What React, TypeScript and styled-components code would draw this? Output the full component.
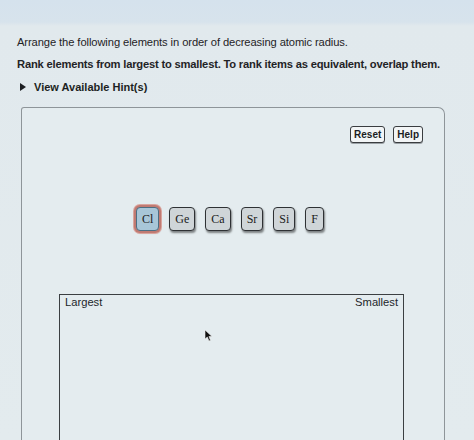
import React from "react";
import styled, { createGlobalStyle } from "styled-components";

const GlobalStyle = createGlobalStyle`
    html, body {
        margin: 0;
        padding: 0;
        background: #e1e9ed;
        font-family: "Liberation Sans", Arial, sans-serif;
        color: #1f2326;
        overflow: hidden;
    }
`;

const Page = styled.div`
    width: 474px;
    height: 440px;
    overflow: hidden;
    background: linear-gradient(180deg, #d5e2ed 0px, #d7e3ec 22px, #e1e9ed 26px, #e3ebee 100%);
`;

const Intro = styled.div`
    padding: 35px 0 0 17px;
`;

const Prompt = styled.p`
    margin: 0;
    font-size: 11.2px;
    line-height: 14px;
    letter-spacing: -0.1px;
`;

const Instruction = styled.p`
    margin: 8px 0 0;
    font-size: 11.2px;
    line-height: 14px;
    font-weight: 700;
    letter-spacing: -0.2px;
`;

const HintToggle = styled.div`
    display: flex;
    align-items: center;
    gap: 8px;
    margin: 10px 0 0 3px;
    font-size: 11px;
    font-weight: 700;
    color: #1c1f22;
`;

const Caret = styled.span`
    width: 0;
    height: 0;
    border-top: 4px solid transparent;
    border-bottom: 4px solid transparent;
    border-left: 6px solid #1c1f22;
`;

const Panel = styled.div`
    margin: 14px 0 0 21px;
    width: 424px;
    height: 340px;
    border: 1px solid #8e9599;
    border-bottom: none;
    border-radius: 3px 7px 0 0;
    box-sizing: border-box;
    padding: 18px 21px 0 37px;
    display: flex;
    flex-direction: column;
    background: #e4ecef;
`;

const Toolbar = styled.div`
    display: flex;
    justify-content: flex-end;
    gap: 8px;
`;

const ToolButton = styled.button`
    font-family: "Liberation Sans", Arial, sans-serif;
    font-size: 10px;
    font-weight: 700;
    color: #1b1d1f;
    background: #f2f5f6;
    border: 1px solid #3a3d40;
    border-radius: 3px;
    padding: 0 3px;
    height: 17px;
    line-height: 15px;
    box-shadow: 0 1px 0 #9aa1a5;
`;

const TileRow = styled.div`
    display: flex;
    justify-content: center;
    align-items: center;
    gap: 10px;
    margin: 64px 0 0 -22px;
`;

const Tile = styled.div<{ $selected?: boolean }>`
    font-family: "Liberation Serif", "Times New Roman", serif;
    font-size: 12px;
    color: #1a1a1a;
    height: 24px;
    min-width: 12px;
    padding: 0 5px;
    display: flex;
    align-items: center;
    justify-content: center;
    box-sizing: border-box;
    border-radius: 4px;
    border: 1.5px solid ${(p) => (p.$selected ? "#4c6e82" : "#2e3134")};
    background: ${(p) => (p.$selected ? "#a8c6d8" : "#cfd5d8")};
    box-shadow: ${(p) =>
        p.$selected
            ? "0 0 0 2px #c07a72, 0 0 0 3px #d9a59e, 1px 2px 2px rgba(0,0,0,0.3)"
            : "1px 2px 2px rgba(0,0,0,0.45)"};
`;

const RankBox = styled.div`
    position: relative;
    margin-top: 63px;
    width: 345px;
    flex: 1;
    border: 1.5px solid #3b3f42;
    border-bottom: none;
    box-sizing: border-box;
    display: flex;
    justify-content: space-between;
    align-items: flex-start;
    padding: 1px 5px 0 5px;
    font-size: 11.2px;
    color: #22262a;
`;

const Cursor = styled.svg`
    position: absolute;
    left: 144px;
    top: 34px;
`;

const elements = ["Cl", "Ge", "Ca", "Sr", "Si", "F"];

const App = () => {
    return (
        <Page>
            <GlobalStyle />
            <Intro>
                <Prompt>Arrange the following elements in order of decreasing atomic radius.</Prompt>
                <Instruction>
                    Rank elements from largest to smallest. To rank items as equivalent, overlap them.
                </Instruction>
                <HintToggle>
                    <Caret />
                    View Available Hint(s)
                </HintToggle>
            </Intro>
            <Panel>
                <Toolbar>
                    <ToolButton>Reset</ToolButton>
                    <ToolButton>Help</ToolButton>
                </Toolbar>
                <TileRow>
                    {elements.map((el, i) => (
                        <Tile key={el} $selected={i === 0}>
                            {el}
                        </Tile>
                    ))}
                </TileRow>
                <RankBox>
                    <span>Largest</span>
                    <span>Smallest</span>
                    <Cursor width="9" height="13" viewBox="0 0 9 13">
                        <path d="M1 1 L1 10 L3.3 8 L5 12 L6.5 11.3 L4.9 7.5 L8 7.5 Z" fill="#111" stroke="#eee" strokeWidth="0.6" />
                    </Cursor>
                </RankBox>
            </Panel>
        </Page>
    );
};

export default App;
